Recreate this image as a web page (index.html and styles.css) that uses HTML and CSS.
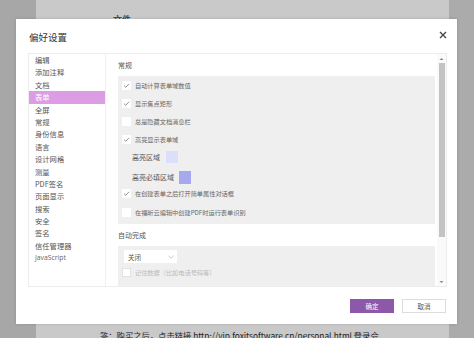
FILE: index.html
```
<!DOCTYPE html>
<html lang="zh">
<head>
<meta charset="utf-8">
<link rel="stylesheet" href="styles.css">
</head>
<body>
<div class="backdrop">
  <div class="gutter-left"></div>
  <div class="page">
    <div class="page-top">文件</div>
    <div class="page-bottom">答：购买之后，点击链接 http://vip.foxitsoftware.cn/personal.html 登录会</div>
  </div>
  <div class="gutter-right"></div>
</div>

<div class="dialog">
  <div class="dialog-header">
    <span class="dialog-title">偏好设置</span>
    <svg class="close" width="8" height="8" viewBox="0 0 8 8"><path d="M1 1L7 7M7 1L1 7" stroke="#444" stroke-width="1.3" fill="none"/></svg>
  </div>
  <div class="dialog-body">
    <ul class="nav">
      <li>编辑</li>
      <li>添加注释</li>
      <li>文档</li>
      <li class="active">表单</li>
      <li>全屏</li>
      <li>常规</li>
      <li>身份信息</li>
      <li>语言</li>
      <li>设计网格</li>
      <li>测量</li>
      <li>PDF签名</li>
      <li>页面显示</li>
      <li>搜索</li>
      <li>安全</li>
      <li>签名</li>
      <li>信任管理器</li>
      <li class="latin">JavaScript</li>
    </ul>
    <div class="main">
      <div class="content">
        <div class="section-title">常规</div>
        <div class="group">
          <div class="row"><span class="cb checked"><svg width="9" height="9" viewBox="0 0 9 9"><path d="M2 4.6L3.8 6.3L7 2.8" stroke="#888" stroke-width="0.9" fill="none"/></svg></span><span>自动计算表单域数值</span></div>
          <div class="row"><span class="cb checked"><svg width="9" height="9" viewBox="0 0 9 9"><path d="M2 4.6L3.8 6.3L7 2.8" stroke="#888" stroke-width="0.9" fill="none"/></svg></span><span>显示焦点矩形</span></div>
          <div class="row"><span class="cb"></span><span>总是隐藏文档消息栏</span></div>
          <div class="row"><span class="cb checked"><svg width="9" height="9" viewBox="0 0 9 9"><path d="M2 4.6L3.8 6.3L7 2.8" stroke="#888" stroke-width="0.9" fill="none"/></svg></span><span>高亮显示表单域</span></div>
          <div class="row swatch-row"><span class="swatch-label">高亮区域</span><span class="swatch light"></span></div>
          <div class="row swatch-row req"><span class="swatch-label">高亮必填区域</span><span class="swatch dark"></span></div>
          <div class="row short"><span class="cb checked"><svg width="9" height="9" viewBox="0 0 9 9"><path d="M2 4.6L3.8 6.3L7 2.8" stroke="#888" stroke-width="0.9" fill="none"/></svg></span><span>在创建表单之后打开简单属性对话框</span></div>
          <div class="row last"><span class="cb"></span><span>在福昕云编辑中创建PDF时运行表单识别</span></div>
        </div>
        <div class="section-title">自动完成</div>
        <div class="group group-auto">
          <div class="select"><span>关闭</span><svg width="6" height="4" viewBox="0 0 6 4"><path d="M0.5 0.8L3 3.2L5.5 0.8" stroke="#bbb" stroke-width="0.8" fill="none"/></svg></div>
          <div class="row disabled"><span class="cb"></span><span>记住数据（比如电话号码等）</span></div>
        </div>
      </div>
      <div class="scrollbar">
        <svg class="arrow" width="9" height="6" viewBox="0 0 9 6"><path d="M2.5 4L4.5 2L6.5 4Z" fill="#888"/></svg>
        <div class="thumb"></div>
        <div class="track-rest"></div>
        <svg class="arrow" width="9" height="6" viewBox="0 0 9 6"><path d="M2.5 2L4.5 4L6.5 2Z" fill="#888"/></svg>
      </div>
    </div>
  </div>
  <div class="dialog-footer">
    <button class="btn primary">确定</button>
    <button class="btn">取消</button>
  </div>
</div>
</body>
</html>
```

FILE: styles.css
```
* { box-sizing: border-box; }
html, body { margin: 0; padding: 0; }
body {
  width: 474px;
  height: 338px;
  overflow: hidden;
  font-family: "Noto Sans CJK SC", "Noto Sans", sans-serif;
  background: #a9a9a9;
}
.backdrop {
  display: flex;
  height: 338px;
}
.gutter-left { width: 36px; background: #a7a7a7; }
.page {
  width: 413px;
  background: #c9c9c9;
  display: flex;
  flex-direction: column;
  justify-content: space-between;
}
.gutter-right { flex: 1; background: #ababab; }
.page-top {
  font-size: 9px;
  line-height: 12px;
  margin-top: 14px;
  padding-left: 77px;
  color: #4a4a4a;
  font-weight: bold;
}
.page-bottom {
  font-size: 8.3px;
  line-height: 12px;
  padding-left: 64px;
  margin-bottom: -3px;
  color: #222;
  white-space: nowrap;
  font-family: "Noto Sans CJK SC", sans-serif;
}

.dialog {
  position: absolute;
  left: 16px;
  top: 19px;
  width: 441px;
  height: 305px;
  background: #fff;
  display: flex;
  flex-direction: column;
  box-shadow: 0 0 3px rgba(0,0,0,0.15);
}
.dialog-header {
  height: 34px;
  padding: 2px 10px 0 13px;
  display: flex;
  align-items: center;
  justify-content: space-between;
}
.dialog-title {
  font-size: 9.5px;
  color: #333;
}
.close { display: block; margin-top: -4px; }

.dialog-body {
  margin: 0 10px 0 12px;
  height: 234px;
  border: 1px solid #ececec;
  display: flex;
  overflow: hidden;
}
.nav {
  list-style: none;
  margin: 0;
  padding: 0;
  width: 77px;
  border-right: 1px solid #efefef;
}
.nav li {
  height: 12.4px;
  line-height: 12.4px;
  padding-left: 6px;
  font-size: 7.3px;
  color: #555;
  white-space: nowrap;
}
.nav li.active {
  background: #dd9de4;
  color: #fff;
}
.nav li.latin {
  font-family: "Open Sans", sans-serif;
  font-size: 6.8px;
  color: #666;
}

.main {
  flex: 1;
  display: flex;
  min-width: 0;
}
.content {
  flex: 1;
  padding: 0 2px 0 12px;
  overflow: hidden;
}
.section-title {
  height: 22px;
  line-height: 22px;
  font-size: 7px;
  color: #555;
}
.group {
  background: #efefef;
  padding: 0 0 3px 4px;
}
.row {
  height: 18px;
  display: flex;
  align-items: center;
  gap: 4px;
  font-size: 6.2px;
  color: #666;
  white-space: nowrap;
}
.row.short { height: 16px; }
.row.last { margin-top: 2px; }
.cb {
  width: 9px;
  height: 9px;
  background: #fff;
  display: block;
  flex: none;
}
.cb svg { display: block; }
.swatch-row {
  padding-left: 10px;
  font-size: 7px;
  color: #555;
  gap: 6px;
}
.swatch-row.req { margin-top: 3px; height: 16px; gap: 5px; }
.swatch { width: 12px; height: 12px; display: block; flex: none; }
.swatch.light { background: #dcdff9; }
.swatch.dark { background: #a7a9f0; width: 12px; height: 13px; }

.group-auto {
  padding: 4px 0 10px 6px;
}
.select {
  width: 53px;
  height: 13px;
  background: #fff;
  display: flex;
  align-items: center;
  justify-content: space-between;
  padding: 0 3px 0 4px;
  font-size: 6.5px;
  color: #555;
}
.select svg { display: block; }
.row.disabled {
  margin-left: -2px;
  margin-top: 2px;
  height: 14px;
  color: #bbb;
}
.row.disabled .cb { border: 1px solid #e2e2e2; }

.scrollbar {
  width: 9px;
  display: flex;
  flex-direction: column;
  align-items: center;
  background: #fafafa;
}
.arrow { display: block; flex: none; margin-top: 2px; }
.scrollbar .arrow:last-child { margin-top: 0; margin-bottom: 1px; }
.thumb {
  width: 6px;
  height: 174px;
  margin-top: 1px;
  background: #c3c3c3;
}
.track-rest { flex: 1; }

.dialog-footer {
  display: flex;
  justify-content: flex-end;
  gap: 8px;
  padding: 12px 11px 0 0;
}
.btn {
  width: 44px;
  height: 14px;
  border: 1px solid #ddd;
  background: #fff;
  font-family: "Noto Sans CJK SC", sans-serif;
  font-size: 6.5px;
  color: #555;
  padding: 0;
  line-height: 12px;
}
.btn.primary {
  background: #8e58aa;
  border-color: #8e58aa;
  color: #fff;
}
```
